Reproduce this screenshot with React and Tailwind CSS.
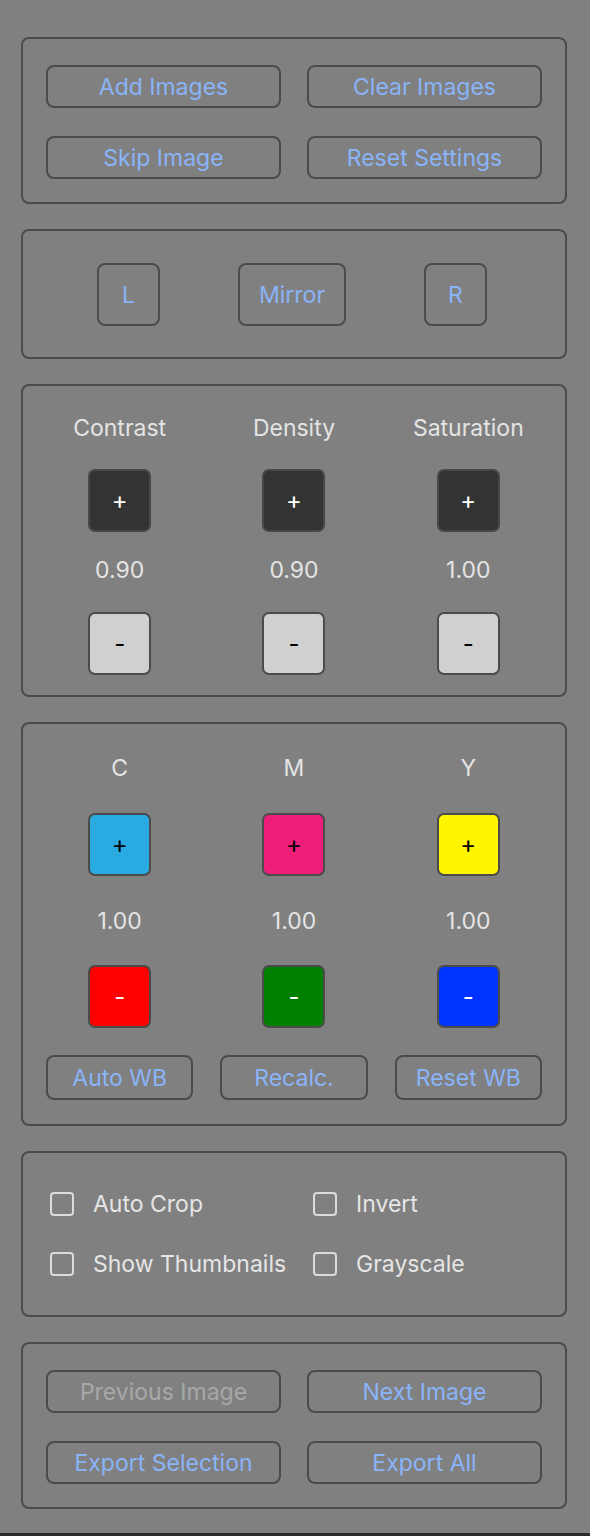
import React from "react";

const panel = "border-2 border-[#4b4b4b] rounded-[8px]";
const textBtn =
  "flex items-center justify-center border-2 border-[#4b4b4b] rounded-[8px] text-[23px] text-[#8ab4f8] pt-[2px]";
const square =
  "w-[63px] h-[63px] flex items-center justify-center border-2 border-[#4b4b4b] rounded-[7px] text-[24px]";

const TwoByTwo = ({ items }) => (
  <div className={`${panel} grid grid-cols-2 gap-x-[26px] gap-y-[28px] px-[23px] pt-[26px] pb-[23px]`}>
    {items.map((it) => (
      <div
        key={it.label}
        className={`${textBtn} h-[43px] ${it.disabled ? "text-[#a8a8a8]" : ""}`}
      >
        {it.label}
      </div>
    ))}
  </div>
);

const Adjust = ({ cols, spacing }) => (
  <div className="grid grid-cols-3 gap-x-[27px]">
    {cols.map((c) => (
      <div key={c.label} className="flex flex-col items-center">
        <div className="h-[28px] leading-[28px] text-[23px] text-[#e4e4e4]">{c.label}</div>
        <div className={`${square} ${c.plus}`} style={{ marginTop: spacing[0] }}>
          +
        </div>
        <div
          className="h-[28px] leading-[28px] text-[23px] text-[#e4e4e4]"
          style={{ marginTop: spacing[1] }}
        >
          {c.value}
        </div>
        <div className={`${square} ${c.minus}`} style={{ marginTop: spacing[2] }}>
          -
        </div>
      </div>
    ))}
  </div>
);

const Check = ({ label }) => (
  <div className="flex items-center h-[28px]">
    <div className="w-[24px] h-[24px] shrink-0 border-2 border-[#dcdcdc] rounded-[4px]" />
    <span className="ml-[19px] whitespace-nowrap text-[23px] leading-[28px] text-[#e6e6e6]">
      {label}
    </span>
  </div>
);

export default function App() {
  return (
    <div
      className="bg-[#808080] min-h-[1536px] flex flex-col"
      style={{ fontFamily: "Inter, 'Noto Sans', sans-serif" }}
    >
      <div className="flex flex-col gap-[25px] ml-[21px] w-[546px] pt-[37px] pb-[24px]">
        <TwoByTwo
          items={[
            { label: "Add Images" },
            { label: "Clear Images" },
            { label: "Skip Image" },
            { label: "Reset Settings" },
          ]}
        />

        <div className={`${panel} flex justify-center gap-[78px] pt-[32px] pb-[31px] pr-[4px]`}>
          <div className={`${textBtn} w-[63px] h-[63px]`}>L</div>
          <div className={`${textBtn} w-[108px] h-[63px]`}>Mirror</div>
          <div className={`${textBtn} w-[63px] h-[63px]`}>R</div>
        </div>

        <div className={`${panel} px-[23px] pt-[28px] pb-[20px]`}>
          <Adjust
            spacing={[27, 24, 28]}
            cols={[
              { label: "Contrast", value: "0.90", plus: "bg-[#333333] text-white border-[#474747]", minus: "bg-[#d0d0d0] text-black" },
              { label: "Density", value: "0.90", plus: "bg-[#333333] text-white border-[#474747]", minus: "bg-[#d0d0d0] text-black" },
              { label: "Saturation", value: "1.00", plus: "bg-[#333333] text-white border-[#474747]", minus: "bg-[#d0d0d0] text-black" },
            ]}
          />
        </div>

        <div className={`${panel} px-[23px] pt-[30px] pb-[24px]`}>
          <Adjust
            spacing={[31, 31, 30]}
            cols={[
              { label: "C", value: "1.00", plus: "bg-[#29abe2] text-black", minus: "bg-[#ff0000] text-white" },
              { label: "M", value: "1.00", plus: "bg-[#ed1e79] text-black", minus: "bg-[#008000] text-white" },
              { label: "Y", value: "1.00", plus: "bg-[#fff500] text-black", minus: "bg-[#0033ff] text-white" },
            ]}
          />
          <div className="grid grid-cols-3 gap-x-[27px] mt-[27px]">
            <div className={`${textBtn} h-[45px]`}>Auto WB</div>
            <div className={`${textBtn} h-[45px]`}>Recalc.</div>
            <div className={`${textBtn} h-[45px]`}>Reset WB</div>
          </div>
        </div>

        <div className={`${panel} grid grid-cols-2 gap-x-[38px] gap-y-[32px] px-[27px] py-[37px]`}>
          <Check label="Auto Crop" />
          <Check label="Invert" />
          <Check label="Show Thumbnails" />
          <Check label="Grayscale" />
        </div>

        <TwoByTwo
          items={[
            { label: "Previous Image", disabled: true },
            { label: "Next Image" },
            { label: "Export Selection" },
            { label: "Export All" },
          ]}
        />
      </div>
      <div className="h-[20px] bg-[#2a2a2c]" />
    </div>
  );
}
